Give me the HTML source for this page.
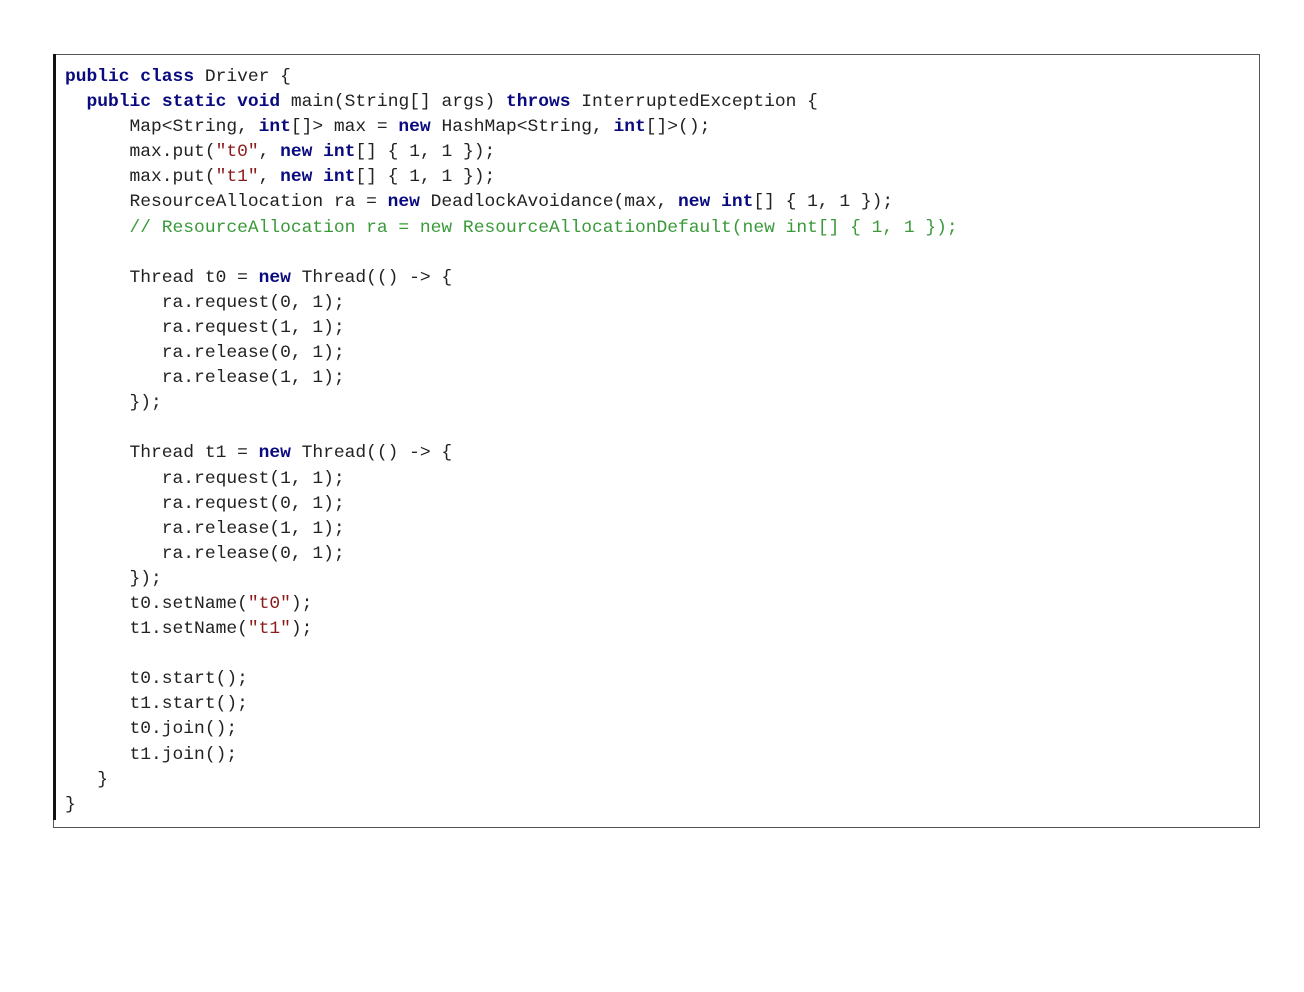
<!DOCTYPE html>
<html><head><meta charset="utf-8"><style>
html,body{margin:0;padding:0;background:#fff;width:1304px;height:992px;overflow:hidden}
.box{position:absolute;left:53px;top:54px;width:1205px;height:772px;border:1px solid #555}
.bar{position:absolute;left:53px;top:54px;width:3px;height:766px;background:#111}
pre{position:absolute;left:65px;top:65px;margin:0;font-family:"Liberation Mono",monospace;font-size:17.93px;line-height:25.1px;color:#222}
b{color:#0a0a80}
.s{color:#8b1a1a}
.c{color:#3a9a3a}
</style></head><body>
<div class="box"></div><div class="bar"></div>
<pre><b>public</b> <b>class</b> Driver {
  <b>public</b> <b>static</b> <b>void</b> main(String[] args) <b>throws</b> InterruptedException {
      Map&lt;String, <b>int</b>[]&gt; max = <b>new</b> HashMap&lt;String, <b>int</b>[]&gt;();
      max.put(<span class="s">"t0"</span>, <b>new</b> <b>int</b>[] { 1, 1 });
      max.put(<span class="s">"t1"</span>, <b>new</b> <b>int</b>[] { 1, 1 });
      ResourceAllocation ra = <b>new</b> DeadlockAvoidance(max, <b>new</b> <b>int</b>[] { 1, 1 });
      <span class="c">// ResourceAllocation ra = new ResourceAllocationDefault(new int[] { 1, 1 });</span>

      Thread t0 = <b>new</b> Thread(() -&gt; {
         ra.request(0, 1);
         ra.request(1, 1);
         ra.release(0, 1);
         ra.release(1, 1);
      });

      Thread t1 = <b>new</b> Thread(() -&gt; {
         ra.request(1, 1);
         ra.request(0, 1);
         ra.release(1, 1);
         ra.release(0, 1);
      });
      t0.setName(<span class="s">"t0"</span>);
      t1.setName(<span class="s">"t1"</span>);

      t0.start();
      t1.start();
      t0.join();
      t1.join();
   }
}</pre>
</body></html>
